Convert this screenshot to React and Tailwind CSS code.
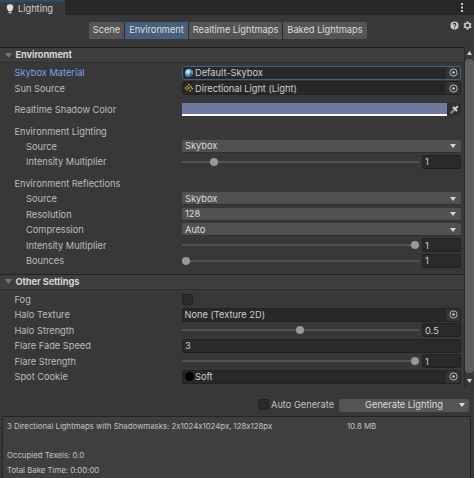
import { clsx } from "clsx";

const TABS = [
  { name: "Scene", width: "w-[35px]" },
  { name: "Environment", width: "w-[63px]" },
  { name: "Realtime Lightmaps", width: "w-[93px]" },
  { name: "Baked Lightmaps", width: "w-[84px]" },
];

function Caret({ className = "h-1 w-1.5" }) {
  return (
    <svg viewBox="0 0 6 4" preserveAspectRatio="none" className={clsx("shrink-0", className)}>
      <path d="M0 0h6L3 4z" fill="currentColor" />
    </svg>
  );
}

function Row({ label, indent, active, children }) {
  return (
    <div className="flex h-[15.45px] items-center">
      <span
        className={clsx(
          "w-[182px] shrink-0 pt-px whitespace-nowrap",
          indent ? "pl-[26px]" : "pl-[14.5px]",
          active ? "text-[#7ba3e6]" : "text-[#bdbdbd]"
        )}
      >
        {label}
      </span>
      <div className="flex w-[279px] items-center">{children}</div>
    </div>
  );
}

function ObjectField({ icon, value, active }) {
  return (
    <div
      className={clsx(
        "flex h-[14px] w-full items-center rounded-[2px] border bg-[#282828] text-[#cfcfcf]",
        active ? "border-[#3f6188]" : "border-[#222222]"
      )}
    >
      {icon}
      <span className={clsx("grow pt-px whitespace-nowrap", icon ? "pl-px" : "pl-[1.5px]")}>
        {value}
      </span>
      <span className="grid h-full w-[14px] place-items-center bg-[#343434]">
        <svg viewBox="0 0 10 10" className="h-[9px] w-[9px] text-[#c6c6c6]">
          <circle cx="5" cy="5" r="4" fill="none" stroke="currentColor" />
          <circle cx="5" cy="5" r="1.4" fill="currentColor" />
        </svg>
      </span>
    </div>
  );
}

function Dropdown({ value }) {
  return (
    <div className="flex h-[13px] w-full items-center rounded-[2px] border-b border-[#303030] bg-[#515151] pr-[5px] pl-[3px] text-[#dedede]">
      <span className="grow pt-px">{value}</span>
      <Caret className="mt-px h-1 w-1.5 text-[#d4d4d4]" />
    </div>
  );
}

function NumberField({ value, wide }) {
  return (
    <div
      className={clsx(
        "flex h-[14px] shrink-0 items-center rounded-[2px] border border-[#222222] bg-[#2a2a2a] pt-px pl-[2px] text-[#cfcfcf]",
        wide ? "w-full" : "w-[39px]"
      )}
    >
      {value}
    </div>
  );
}

function Slider({ position, value }) {
  return (
    <>
      <div className="relative mr-[3px] h-2 w-[237px] shrink-0">
        <div className="mt-[3px] h-[2px] bg-[#535353]" />
        <span
          className="absolute top-0 h-2 w-2 rounded-full bg-[#999999]"
          style={{ left: position }}
        />
      </div>
      <NumberField value={value} />
    </>
  );
}

function SectionHeader({ title }) {
  return (
    <div className="flex h-[16px] items-center border-y border-t-[#222222] border-b-[#303030] bg-[#3e3e3e] pl-[5px]">
      <Caret className="h-[5px] w-[7px] text-[#777777]" />
      <h2 className="pl-[3.5px] font-bold tracking-[-0.01em] text-[#d6d6d6]">{title}</h2>
    </div>
  );
}

function SkyboxIcon() {
  return (
    <svg viewBox="0 0 10 10" className="ml-px h-[10px] w-[10px] shrink-0">
      <circle cx="5" cy="5" r="4.2" fill="#5c9bb5" />
      <path d="M5 9.2A4.2 4.2 0 0 0 9.2 5C8.6 7 7 8.2 3 8.6z" fill="#173545" />
      <circle cx="4" cy="3.8" r="2.2" fill="#b8e0ec" />
      <circle cx="6.8" cy="6.3" r="1" fill="#28566c" />
    </svg>
  );
}

function LightIcon() {
  return (
    <svg viewBox="0 0 10 10" className="ml-px h-[10px] w-[10px] shrink-0" fill="none" stroke="#d5b532">
      <path d="M4.5 1.3 8.7 5.2 5 9" strokeDasharray="1.8 1" strokeWidth="1.3" />
      <path d="M3.8 2.8 1.5 5.1 4 7.5M3.8 5.2h2.4M5 4v2.3" strokeDasharray="1.6 .7" strokeWidth="1.2" />
    </svg>
  );
}

function TopBar() {
  return (
    <div className="flex h-[15px] shrink-0 bg-[#282828]">
      <div className="flex w-[65px] items-center border-t-2 border-[#2f4a6c] bg-[#3a3a3a] pl-[6px] text-[#d2d2d2]">
        <svg viewBox="0 0 8 10" className="h-[10px] w-2" fill="#e0e0e0">
          <path d="M4 .3A3.3 3.3 0 0 0 .7 3.6C.7 5.1 1.7 5.8 2.2 7h3.6c.5-1.2 1.5-1.9 1.5-3.4A3.3 3.3 0 0 0 4 .3z" />
          <path d="M2.4 7.5h3.2v1l-.9 1H3.3l-.9-1z" fill="#b5b5b5" />
        </svg>
        <span className="pl-[4px]">Lighting</span>
      </div>
      <div className="flex grow items-center justify-end pr-[11px]">
        <svg viewBox="0 0 2 9" className="h-[9px] w-[2px]" fill="#c8c8c8">
          <path d="M0 0h2v2H0zM0 3.5h2v2H0zM0 7h2v2H0z" />
        </svg>
      </div>
    </div>
  );
}

function Toolbar() {
  return (
    <div className="flex h-[32px] shrink-0 items-start pl-[89px]">
      <div className="mt-[6.5px] flex h-[17px] gap-px bg-[#2b2b2b]">
        {TABS.map((tab) => (
          <button
            key={tab.name}
            className={clsx(
              "whitespace-nowrap text-[#dedede]",
              tab.width,
              tab.name === "Environment" ? "bg-[#46607c]" : "bg-[#555555]"
            )}
          >
            {tab.name}
          </button>
        ))}
      </div>
      <div className="mt-[6px] mr-[2px] ml-auto flex gap-[4px]">
        <svg viewBox="0 0 10 10" className="h-[9px] w-[9px]">
          <circle cx="5" cy="5" r="4.5" fill="#c8c8c8" />
          <path d="M3.6 4a1.4 1.4 0 1 1 2.1 1.2c-.5.3-.7.5-.7 1M5 7v1.1" fill="none" stroke="#333333" strokeWidth="1.2" />
        </svg>
        <svg viewBox="0 0 10 10" className="h-[9px] w-[9px]" fill="none" stroke="#c8c8c8">
          <circle cx="5" cy="5" r="2.8" strokeWidth="1.7" />
          <path d="M5 .3V2M5 8v1.7M.9 2.7l1.5.8M7.6 6.5l1.5.8M.9 7.3l1.5-.8M7.6 3.5l1.5-.8" strokeWidth="1.9" />
        </svg>
      </div>
    </div>
  );
}

function Scrollbar() {
  return (
    <div className="flex w-[10px] shrink-0 flex-col items-center border-l border-[#2b2b2b] bg-[#373737] text-[#d0d0d0]">
      <Caret className="mt-[4px] h-[4px] w-[5px] rotate-180" />
      <div className="mt-[4px] h-[314px] w-full rounded-[4px] bg-[#5e5e5e]" />
      <Caret className="mt-[6px] h-[4px] w-[5px]" />
    </div>
  );
}

export default function App() {
  return (
    <main className="flex h-[478px] w-[474px] flex-col overflow-hidden bg-[#383838] font-[Inter,sans-serif] text-[9.25px] leading-[12px] text-[#c4c4c4] [font-feature-settings:'calt'_0]">
      <TopBar />
      <Toolbar />

      <div className="flex h-[341px] shrink-0">
        <div className="w-[464px]">
          <SectionHeader title="Environment" />
          <div className="flex flex-col gap-[6px] pt-[2px]">
            <div>
              <Row label="Skybox Material" active>
                <ObjectField icon={<SkyboxIcon />} value="Default-Skybox" active />
              </Row>
              <Row label="Sun Source">
                <ObjectField icon={<LightIcon />} value="Directional Light (Light)" />
              </Row>
            </div>
            <Row label="Realtime Shadow Color">
              <div className="h-[13px] w-[265px] border-b-2 border-white bg-[#6f789f]" />
              <span className="grid h-[13px] w-[14px] place-items-center bg-[#303030]">
                <svg viewBox="0 0 10 10" className="h-[10px] w-[10px]">
                  <path d="M1 9l.5-2 4-4L7 4.5l-4 4z" fill="#8c8c8c" />
                  <path d="M4.5 2.5l3 3M6 4l2.3-2.3" stroke="#d0d0d0" strokeWidth="1.9" strokeLinecap="round" />
                </svg>
              </span>
            </Row>
            <div>
              <Row label="Environment Lighting" />
              <Row label="Source" indent>
                <Dropdown value="Skybox" />
              </Row>
              <Row label="Intensity Multiplier" indent>
                <Slider position={28} value="1" />
              </Row>
            </div>
            <div>
              <Row label="Environment Reflections" />
              <Row label="Source" indent>
                <Dropdown value="Skybox" />
              </Row>
              <Row label="Resolution" indent>
                <Dropdown value="128" />
              </Row>
              <Row label="Compression" indent>
                <Dropdown value="Auto" />
              </Row>
              <Row label="Intensity Multiplier" indent>
                <Slider position={229} value="1" />
              </Row>
              <Row label="Bounces" indent>
                <Slider position={0} value="1" />
              </Row>
            </div>
          </div>

          <div className="mt-[5.5px]">
            <SectionHeader title="Other Settings" />
          </div>
          <div className="pt-[2px]">
            <Row label="Fog">
              <span className="h-[11px] w-[11px] rounded-[2px] border border-[#222222] bg-[#2a2a2a]" />
            </Row>
            <Row label="Halo Texture">
              <ObjectField value="None (Texture 2D)" />
            </Row>
            <Row label="Halo Strength">
              <Slider position={114} value="0.5" />
            </Row>
            <Row label="Flare Fade Speed">
              <NumberField value="3" wide />
            </Row>
            <Row label="Flare Strength">
              <Slider position={229} value="1" />
            </Row>
            <Row label="Spot Cookie">
              <ObjectField
                icon={<span className="ml-[2px] h-[9px] w-[9px] shrink-0 rounded-full bg-black" />}
                value="Soft"
              />
            </Row>
          </div>
        </div>
        <Scrollbar />
      </div>

      <div className="flex h-[28px] shrink-0 items-center justify-end pt-[6px] pr-[5px]">
        <span className="mb-px h-[11px] w-[11px] rounded-[2px] border border-[#222222] bg-[#2a2a2a]" />
        <span className="w-[70px] pl-[2px] whitespace-nowrap">Auto Generate</span>
        <button className="flex h-[13px] w-[130px] items-center rounded-[2px] bg-[#555555] pr-[4px] pl-[10px] text-[#dedede]">
          <span className="grow text-center">Generate Lighting</span>
          <Caret className="h-1 w-1.5 text-[#dedede]" />
        </button>
      </div>

      <div className="mr-[3px] ml-[2px] grow border border-b-0 border-[#242424] bg-[#3f3f3f] px-[4px] pt-[2px] text-[7.8px] leading-[14.6px]">
        <div className="flex h-[29.2px]">
          <span className="w-[340px] whitespace-nowrap">
            3 Directional Lightmaps with Shadowmasks: 2x1024x1024px, 128x128px
          </span>
          <span>10.8 MB</span>
        </div>
        <p>Occupied Texels: 0.0</p>
        <p>Total Bake Time: 0:00:00</p>
      </div>
    </main>
  );
}
